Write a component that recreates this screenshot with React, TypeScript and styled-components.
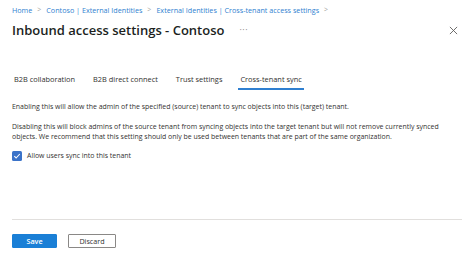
import styled, { createGlobalStyle } from "styled-components";

const Global = createGlobalStyle`
  html, body {
    margin: 0;
    padding: 0;
    background: #ffffff;
  }
  body {
    font-family: "Open Sans", "Noto Sans", "Liberation Sans", sans-serif;
    color: #323130;
  }
`;

const Page = styled.div`
  width: 474px;
  height: 260px;
  box-sizing: border-box;
  padding: 4px 12px 0 12px;
  display: flex;
  flex-direction: column;
`;

const Breadcrumb = styled.nav`
  display: flex;
  align-items: center;
  gap: 5px;
  font-size: 7.2px;
  line-height: 12px;
  height: 12px;
`;

const Crumb = styled.a`
  color: #2f7fd0;
  text-decoration: none;
`;

const Chevron = styled.span`
  color: #a19f9d;
  font-size: 7px;
`;

const TitleRow = styled.div`
  display: flex;
  align-items: center;
  height: 20px;
  margin-top: 4px;
`;

const Title = styled.h1`
  margin: 0;
  font-size: 13px;
  font-weight: 600;
  line-height: 20px;
  color: #201f1e;
  white-space: nowrap;
`;

const More = styled.span`
  margin-left: 15px;
  color: #8a8886;
  font-size: 9px;
  letter-spacing: 0.5px;
  line-height: 20px;
`;

const Close = styled.button`
  margin-left: auto;
  margin-right: 4px;
  border: none;
  background: none;
  padding: 0;
  width: 10px;
  height: 10px;
  display: flex;
  align-items: center;
  justify-content: center;
  color: #605e5c;
`;

const Tabs = styled.div`
  display: flex;
  gap: 14px;
  margin-top: 29px;
`;

const Tab = styled.div<{ $active?: boolean }>`
  padding: 5px 2px 4px 2px;
  font-size: 7.4px;
  line-height: 10px;
  color: #323130;
  border-bottom: 2px solid ${({ $active }) => ($active ? "#2f7fd0" : "transparent")};
  white-space: nowrap;
`;

const Text = styled.p<{ $gap: number }>`
  margin: ${({ $gap }) => $gap}px 0 0 0;
  font-size: 6.95px;
  line-height: 10px;
  color: #323130;
`;

const Line = styled.span`
  display: block;
  white-space: nowrap;
`;

const CheckRow = styled.label`
  display: flex;
  align-items: center;
  gap: 5px;
  margin-top: 9px;
  font-size: 6.95px;
  line-height: 10px;
`;

const Box = styled.span`
  width: 10px;
  height: 10px;
  border-radius: 1.5px;
  background: #3b73c9;
  display: flex;
  align-items: center;
  justify-content: center;
`;

const Spacer = styled.div`
  flex: 1;
`;

const Divider = styled.hr`
  margin: 0;
  border: none;
  border-top: 1px solid #e1dfdd;
  width: 450px;
`;

const Footer = styled.div`
  display: flex;
  gap: 11px;
  padding-top: 14px;
  height: 26px;
`;

const Button = styled.button<{ $primary?: boolean }>`
  height: 14px;
  padding: 0;
  box-sizing: border-box;
  font-family: inherit;
  font-size: 7.2px;
  font-weight: ${({ $primary }) => ($primary ? 600 : 400)};
  line-height: 12px;
  border-radius: 1px;
  border: 1px solid ${({ $primary }) => ($primary ? "#1a7fd6" : "#8a8886")};
  background: ${({ $primary }) => ($primary ? "#1a7fd6" : "#ffffff")};
  color: ${({ $primary }) => ($primary ? "#ffffff" : "#323130")};
  width: ${({ $primary }) => ($primary ? "45px" : "48px")};
`;

export default function App() {
  return (
    <Page>
      <Global />
      <Breadcrumb>
        <Crumb>Home</Crumb>
        <Chevron>&gt;</Chevron>
        <Crumb>Contoso | External Identities</Crumb>
        <Chevron>&gt;</Chevron>
        <Crumb>External Identities | Cross-tenant access settings</Crumb>
        <Chevron>&gt;</Chevron>
      </Breadcrumb>
      <TitleRow>
        <Title>Inbound access settings - Contoso</Title>
        <More>···</More>
        <Close aria-label="Close">
          <svg width="9" height="9" viewBox="0 0 10 10">
            <path d="M1 1 L9 9 M9 1 L1 9" stroke="#605e5c" strokeWidth="1" fill="none" />
          </svg>
        </Close>
      </TitleRow>
      <Tabs>
        <Tab>B2B collaboration</Tab>
        <Tab>B2B direct connect</Tab>
        <Tab>Trust settings</Tab>
        <Tab $active>Cross-tenant sync</Tab>
      </Tabs>
      <Text $gap={12}>
        Enabling this will allow the admin of the specified (source) tenant to sync objects into this (target) tenant.
      </Text>
      <Text $gap={10}>
        <Line>
          Disabling this will block admins of the source tenant from syncing objects into the target tenant but will not remove currently synced
        </Line>
        <Line>
          objects. We recommend that this setting should only be used between tenants that are part of the same organization.
        </Line>
      </Text>
      <CheckRow>
        <Box>
          <svg width="8" height="8" viewBox="0 0 8 8">
            <path d="M1.3 4.2 L3.1 6 L6.8 2" stroke="#ffffff" strokeWidth="1.1" fill="none" />
          </svg>
        </Box>
        Allow users sync into this tenant
      </CheckRow>
      <Spacer />
      <Divider />
      <Footer>
        <Button $primary>Save</Button>
        <Button>Discard</Button>
      </Footer>
    </Page>
  );
}
